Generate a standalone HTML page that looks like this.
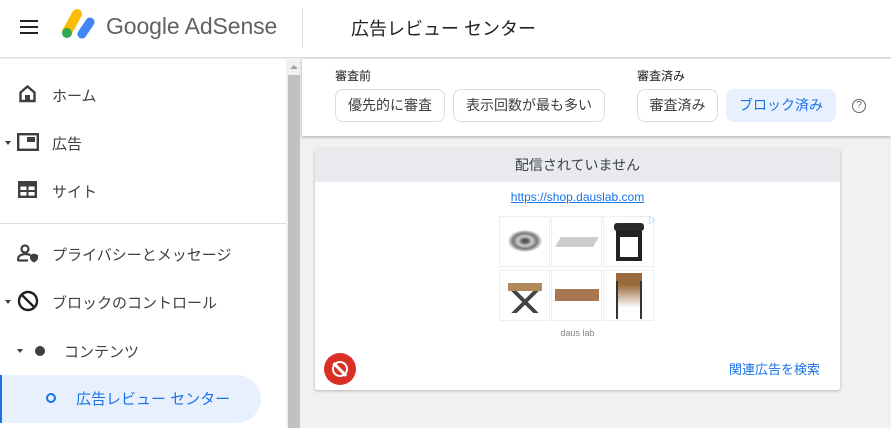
<!DOCTYPE html>
<html><head><meta charset="utf-8"><style>
*{box-sizing:border-box;margin:0;padding:0}
body{width:891px;height:428px;overflow:hidden;background:#f1f1f1;font-family:"Liberation Sans","Noto Sans CJK JP",sans-serif;position:relative;color:#3c4043}
.hdr{position:absolute;left:0;top:0;width:891px;height:58px;background:#fff;border-bottom:1px solid #dadce0}
.side{position:absolute;left:0;top:59px;width:286px;height:369px;background:#fff}
.sb{position:absolute;left:286px;top:59px;width:15px;height:369px;background:#f1f1f1}
.thumb{position:absolute;left:288px;top:75px;width:12px;height:353px;background:#c1c1c1}
.item{position:absolute;left:0;font-size:15px;color:#3c4043}
.main{position:absolute;left:302px;top:59px;width:589px;height:77px;background:#fff;box-shadow:0 1px 3px rgba(0,0,0,.3)}
.lbl{position:absolute;font-size:12px;color:#202124}
.chip{position:absolute;top:89px;height:33px;border:1px solid #dadce0;border-radius:8px;font-size:14px;line-height:31px;text-align:center;color:#3c4043;background:#fff}
.card{position:absolute;left:315px;top:149px;width:525px;height:241px;background:#fff;border-radius:3px;box-shadow:0 1px 3px rgba(0,0,0,.25);overflow:hidden}
.img{position:absolute;width:51px;height:51px;background:#fff;border:1px solid #eee}
</style></head><body>
<div class="hdr">
 <div style="position:absolute;left:20px;top:20px;width:18px;height:2px;background:#202124;box-shadow:0 6px 0 #202124,0 12px 0 #202124"></div>
 <svg style="position:absolute;left:59px;top:8px" width="38" height="32" viewBox="0 0 38 32">
  <line x1="18" y1="6" x2="8" y2="24" stroke="#fbbc04" stroke-width="10" stroke-linecap="round"/>
  <circle cx="8" cy="25" r="5" fill="#34a853"/>
  <line x1="31" y1="14" x2="23" y2="26" stroke="#4285f4" stroke-width="9" stroke-linecap="round"/>
 </svg>
 <div style="position:absolute;left:106px;top:13px;font-size:23px;color:#5f6368;letter-spacing:-0.1px">Google AdSense</div>
 <div style="position:absolute;left:302px;top:8px;width:1px;height:40px;background:#dadce0"></div>
 <div style="position:absolute;left:351px;top:15px;font-size:18px;color:#202124">広告レビュー センター</div>
</div>
<div class="side">
 <svg style="position:absolute;left:18px;top:25px" width="19" height="19" viewBox="0 0 19 19"><path d="M2.5 8.5L9.5 2.5l7 6V17h-14z" fill="none" stroke="#3c4043" stroke-width="2.4"/><rect x="7" y="11" width="5" height="6" fill="#3c4043"/></svg>
 <div class="item" style="left:52px;top:26px">ホーム</div>
 <div style="position:absolute;left:5px;top:82px;border:3px solid transparent;border-top:4px solid #3c4043"></div>
 <svg style="position:absolute;left:17px;top:74px" width="22" height="18"><rect x="1.2" y="1.2" width="19.6" height="15.6" fill="none" stroke="#3c4043" stroke-width="2.4"/><rect x="10" y="4" width="8" height="5" fill="#3c4043"/></svg>
 <div class="item" style="left:52px;top:74px">広告</div>
 <svg style="position:absolute;left:18px;top:122px" width="19" height="17"><rect x="1.2" y="1.2" width="16.6" height="14.6" fill="none" stroke="#3c4043" stroke-width="2.4"/><rect x="1" y="1" width="17" height="4.5" fill="#3c4043"/><line x1="9.5" y1="5" x2="9.5" y2="16" stroke="#3c4043" stroke-width="2"/><line x1="1" y1="10" x2="18" y2="10" stroke="#3c4043" stroke-width="2"/></svg>
 <div class="item" style="left:52px;top:122px">サイト</div>
 <div style="position:absolute;left:0;top:164px;width:286px;height:1px;background:#dadce0"></div>
 <svg style="position:absolute;left:17px;top:185px" width="22" height="19"><circle cx="8" cy="5" r="3.5" fill="none" stroke="#3c4043" stroke-width="2.2"/><path d="M1.2 17v-3c0-2 4-4 7-4s4 .5 5 1" fill="none" stroke="#3c4043" stroke-width="2.2"/><path d="M1 16.5h10" stroke="#3c4043" stroke-width="2.2"/><path d="M13 11l4-1.5 4 1.5v3c0 2-2 3.5-4 4.5-2-1-4-2.5-4-4.5z" fill="#3c4043"/></svg>
 <div class="item" style="left:52px;top:185px">プライバシーとメッセージ</div>
 <div style="position:absolute;left:5px;top:241px;border:3px solid transparent;border-top:4px solid #3c4043"></div>
 <svg style="position:absolute;left:17px;top:231px" width="22" height="22"><circle cx="11" cy="11" r="9" fill="none" stroke="#202124" stroke-width="2.4"/><line x1="4.6" y1="4.6" x2="17.4" y2="17.4" stroke="#202124" stroke-width="2.4"/></svg>
 <div class="item" style="left:52px;top:233px">ブロックのコントロール</div>
 <div style="position:absolute;left:17px;top:290px;border:3px solid transparent;border-top:4px solid #3c4043"></div>
 <div style="position:absolute;left:35px;top:287px;width:10px;height:10px;border-radius:50%;background:#3c4043"></div>
 <div class="item" style="left:64px;top:282px">コンテンツ</div>
 <div style="position:absolute;left:0;top:316px;width:261px;height:48px;background:#e8f0fe;border-radius:0 24px 24px 0;border-left:2px solid #1a73e8"></div>
 <div style="position:absolute;left:46px;top:334px;width:10px;height:10px;border-radius:50%;border:2px solid #1a73e8"></div>
 <div class="item" style="left:76px;top:329px;color:#1a73e8">広告レビュー センター</div>
</div>
<div class="sb"></div><div class="thumb"></div>
<div style="position:absolute;left:290px;top:65px;border:4px solid transparent;border-bottom:4px solid #a3a3a3;border-top:0"></div>
<div class="main"></div>
<div class="lbl" style="left:335px;top:67px">審査前</div>
<div class="lbl" style="left:637px;top:67px">審査済み</div>
<div class="chip" style="left:335px;width:110px">優先的に審査</div>
<div class="chip" style="left:453px;width:152px">表示回数が最も多い</div>
<div class="chip" style="left:637px;width:81px">審査済み</div>
<div class="chip" style="left:726px;width:110px;background:#e8f0fe;border-color:#e8f0fe;color:#1a73e8">ブロック済み</div>
<div style="position:absolute;left:852px;top:99px;width:14px;height:14px;border:1.5px solid #5f6368;border-radius:50%;font-size:10px;line-height:11px;text-align:center;color:#5f6368">?</div>
<div class="card">
 <div style="height:33px;background:#e8eaed;font-size:14px;line-height:33px;text-align:center;color:#3c4043">配信されていません</div>
 <div style="position:absolute;left:0;top:41px;width:525px;text-align:center;font-size:12px;color:#1a73e8;text-decoration:underline">https://shop.dauslab.com</div>
 <div style="position:absolute;left:183px;top:66px;width:158px;height:108px">
  <div class="img" style="left:1px;top:1px"><div style="margin:13px 8px;width:34px;height:22px;border-radius:50%;background:radial-gradient(#555 10%,#ccc 30%,#777 50%,#eee 70%)"></div></div>
  <div class="img" style="left:53px;top:1px"><div style="margin:20px 6px;width:38px;height:10px;background:#ccc;transform:skewX(-30deg)"></div></div>
  <div class="img" style="left:105px;top:1px"><div style="margin:6px 10px 0;width:30px;height:8px;background:#2a2a2a;border-radius:3px"></div><div style="margin:0 12px;width:26px;height:30px;border:4px solid #222;border-top:6px solid #222"></div></div>
  <div class="img" style="left:1px;top:55px"><div style="margin:12px 8px 0;width:34px;height:8px;background:#b08a5a"></div><div style="margin:0 10px;width:30px;height:22px;background:linear-gradient(45deg,transparent 45%,#444 45%,#444 55%,transparent 55%),linear-gradient(-45deg,transparent 45%,#444 45%,#444 55%,transparent 55%)"></div></div>
  <div class="img" style="left:53px;top:55px"><div style="margin:18px 3px;width:44px;height:12px;background:#a87650"></div></div>
  <div class="img" style="left:105px;top:55px"><div style="margin:2px 12px 0;width:26px;height:8px;background:#9b6a3c"></div><div style="margin:0 12px;width:26px;height:38px;border-left:2px solid #333;border-right:2px solid #333;background:linear-gradient(#9b6a3c 0,#9b6a3c 10%,transparent 70%)"></div></div>
  <div style="position:absolute;left:150px;top:0;font-size:8px;color:#4fc3f7">▷</div>
 </div>
 <div style="position:absolute;left:0;top:179px;width:525px;text-align:center;font-size:9px;color:#80868b">daus lab</div>
 <div style="position:absolute;left:9px;top:204px;width:32px;height:32px;border-radius:50%;background:#d93025"><div style="position:absolute;left:8px;top:8px;width:16px;height:16px;border:2.5px solid #fff;border-radius:50%"></div><div style="position:absolute;left:7px;top:15px;width:18px;height:2.5px;background:#fff;transform:rotate(45deg)"></div></div>
 <div style="position:absolute;right:20px;top:210px;font-size:13px;color:#1a73e8">関連広告を検索</div>
</div>
</body></html>
